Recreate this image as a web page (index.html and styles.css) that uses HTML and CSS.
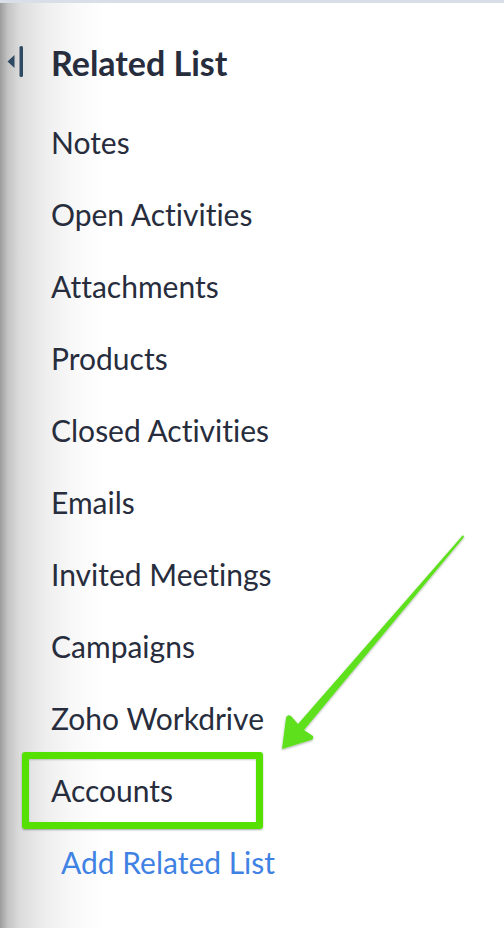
FILE: index.html
```html
<!DOCTYPE html>
<html>
<head>
<meta charset="utf-8">
<link rel="stylesheet" href="styles.css">
</head>
<body>
<div class="page">
  <div class="panel">
    <div class="title-row">
      <svg class="collapse" width="17" height="32" viewBox="0 0 17 32">
        <path d="M8.5 9 L1.5 15.5 L8.5 22 Z" fill="#2d4a62"/>
        <rect x="13.5" y="0" width="3.5" height="31" rx="1.5" fill="#2d4a62"/>
      </svg>
      <h1 class="title">Related List</h1>
    </div>
    <ul class="list">
      <li class="item">Notes</li>
      <li class="item">Open Activities</li>
      <li class="item">Attachments</li>
      <li class="item">Products</li>
      <li class="item">Closed Activities</li>
      <li class="item">Emails</li>
      <li class="item">Invited Meetings</li>
      <li class="item">Campaigns</li>
      <li class="item">Zoho Workdrive</li>
      <li class="item">Accounts</li>
    </ul>
    <a class="add-link" href="#">Add Related List</a>
  </div>
  <div class="highlight"></div>
  <svg class="arrow" width="504" height="928" viewBox="0 0 504 928">
    <defs>
      <filter id="sh" x="-20%" y="-20%" width="140%" height="140%">
        <feDropShadow dx="0" dy="1" stdDeviation="1" flood-color="#000" flood-opacity="0.35"/>
      </filter>
    </defs>
    <path d="M463 535 L464 537 L304 730 L313 736 Q314 739 311 740 L282 749 L286 718 Q287 714 291 716 L298 724 Z" fill="#5ee01c" filter="url(#sh)"/>
  </svg>
</div>
</body>
</html>
```

FILE: styles.css
```css
html, body {
  margin: 0;
  padding: 0;
  background: #fff;
}
.page {
  position: relative;
  width: 504px;
  height: 928px;
  overflow: hidden;
  border-top: 3px solid #d9dee7;
  box-sizing: border-box;
  background: linear-gradient(to right, #9c9c9c 0px, #c4c4c4 8px, #dcdcdc 20px, #eeeeee 45px, #f9f9f9 75px, #ffffff 105px);
  font-family: Lato, "Open Sans", sans-serif;
  font-variant-ligatures: none;
}
.panel {
  padding-top: 40px;
  display: flex;
  flex-direction: column;
}
.title-row {
  display: flex;
  align-items: center;
  gap: 28px;
  padding-left: 6px;
  height: 40px;
}
.collapse {
  display: block;
  margin-top: -3px;
}
.title {
  margin: 0;
  font-size: 34px;
  font-weight: 700;
  line-height: 40px;
  color: #272d3d;
}
.list {
  list-style: none;
  margin: 23px 0 0 0;
  padding: 0 0 0 51px;
}
.item {
  height: 72px;
  line-height: 72px;
  font-size: 30px;
  color: #272d3d;
}
.add-link {
  display: block;
  margin-left: 61px;
  height: 72px;
  line-height: 72px;
  font-size: 30px;
  color: #3f82e3;
  text-decoration: none;
}
.highlight {
  position: absolute;
  left: 22px;
  top: 749px;
  width: 241px;
  height: 77px;
  box-sizing: border-box;
  border: 7px solid #55e000;
  border-radius: 3px;
  box-shadow: 0 1px 2px rgba(0,0,0,0.35), inset 0 1px 2px rgba(0,0,0,0.2);
}
.arrow {
  position: absolute;
  left: 0;
  top: -3px;
}
```
